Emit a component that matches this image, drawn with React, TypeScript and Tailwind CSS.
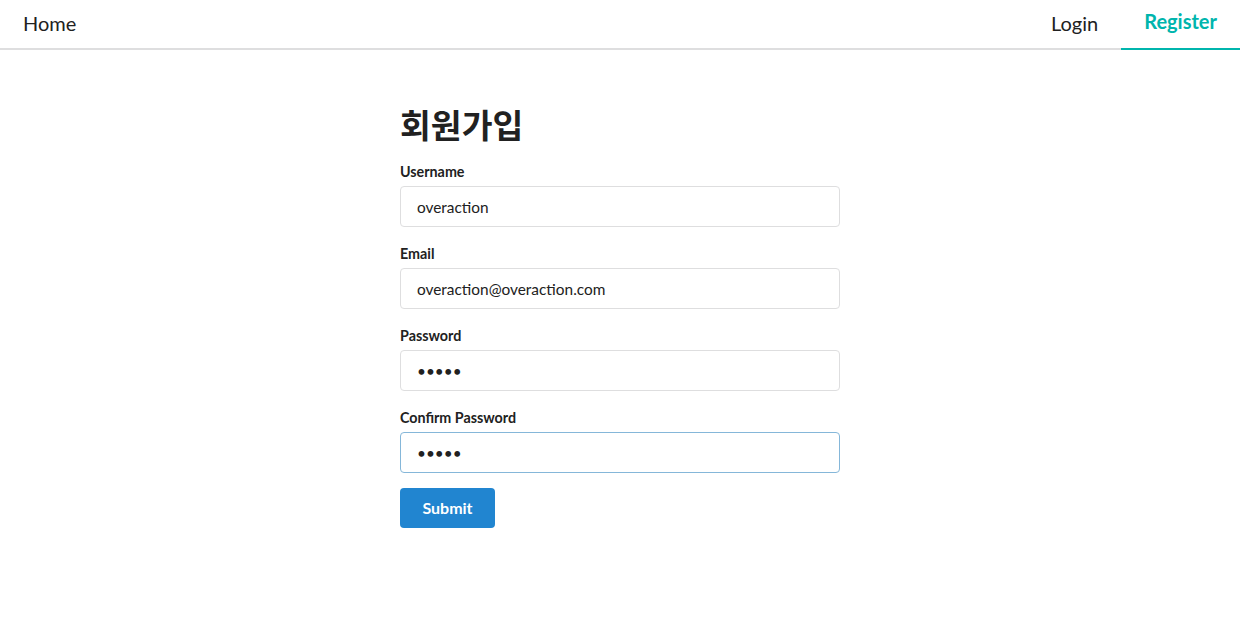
import React from "react";

const font = "font-['Lato','Noto_Sans_CJK_KR',sans-serif]";

function Field({ label, type = "text", value, focused = false }: { label: string; type?: string; value: string; focused?: boolean }) {
  return (
    <div className="flex flex-col">
      <label className="mb-[4px] text-[14.3px] leading-[20px] font-bold text-[#212121]">{label}</label>
      <input
        type={type}
        defaultValue={value}
        autoFocus={focused}
        className={`h-[41px] w-full rounded-[4px] border bg-white px-[16px] text-[15.4px] text-[#212121] outline-none ${
          focused ? "border-[#85b7d9]" : "border-[#dededf]"
        } ${font}`}
      />
    </div>
  );
}

export default function App() {
  return (
    <div className={`mr-[5px] min-h-[618px] bg-white ${font} text-[#212121]`}>
      <nav className="flex h-[50px] items-stretch border-b-2 border-[#dededf]">
        <a className="flex items-center px-[23px] pb-[3px] text-[20px] text-[#212121]">Home</a>
        <div className="ml-auto flex items-stretch">
          <a className="flex items-center px-[23px] pb-[3px] text-[20px] text-[#212121]">Login</a>
          <a className="-mb-[2px] flex items-center border-b-2 border-[#00b5ad] px-[23px] pb-[6px] text-[20px] font-bold text-[#00b5ad]">
            Register
          </a>
        </div>
      </nav>
      <main className="mx-auto w-[440px] pt-[54px]">
        <h1 className="mb-[18px] text-[33.5px] leading-[40px] font-bold text-[#212121] font-['Noto_Sans_CJK_KR',sans-serif]">회원가입</h1>
        <div className="flex flex-col gap-[17px]">
          <Field label="Username" value="overaction" />
          <Field label="Email" value="overaction@overaction.com" />
          <Field label="Password" type="password" value="12345" />
          <Field label="Confirm Password" type="password" value="12345" focused />
        </div>
        <button className="mt-[15px] h-[40px] w-[95px] rounded-[4px] bg-[#2185d0] text-[16px] font-bold text-white">Submit</button>
      </main>
    </div>
  );
}
